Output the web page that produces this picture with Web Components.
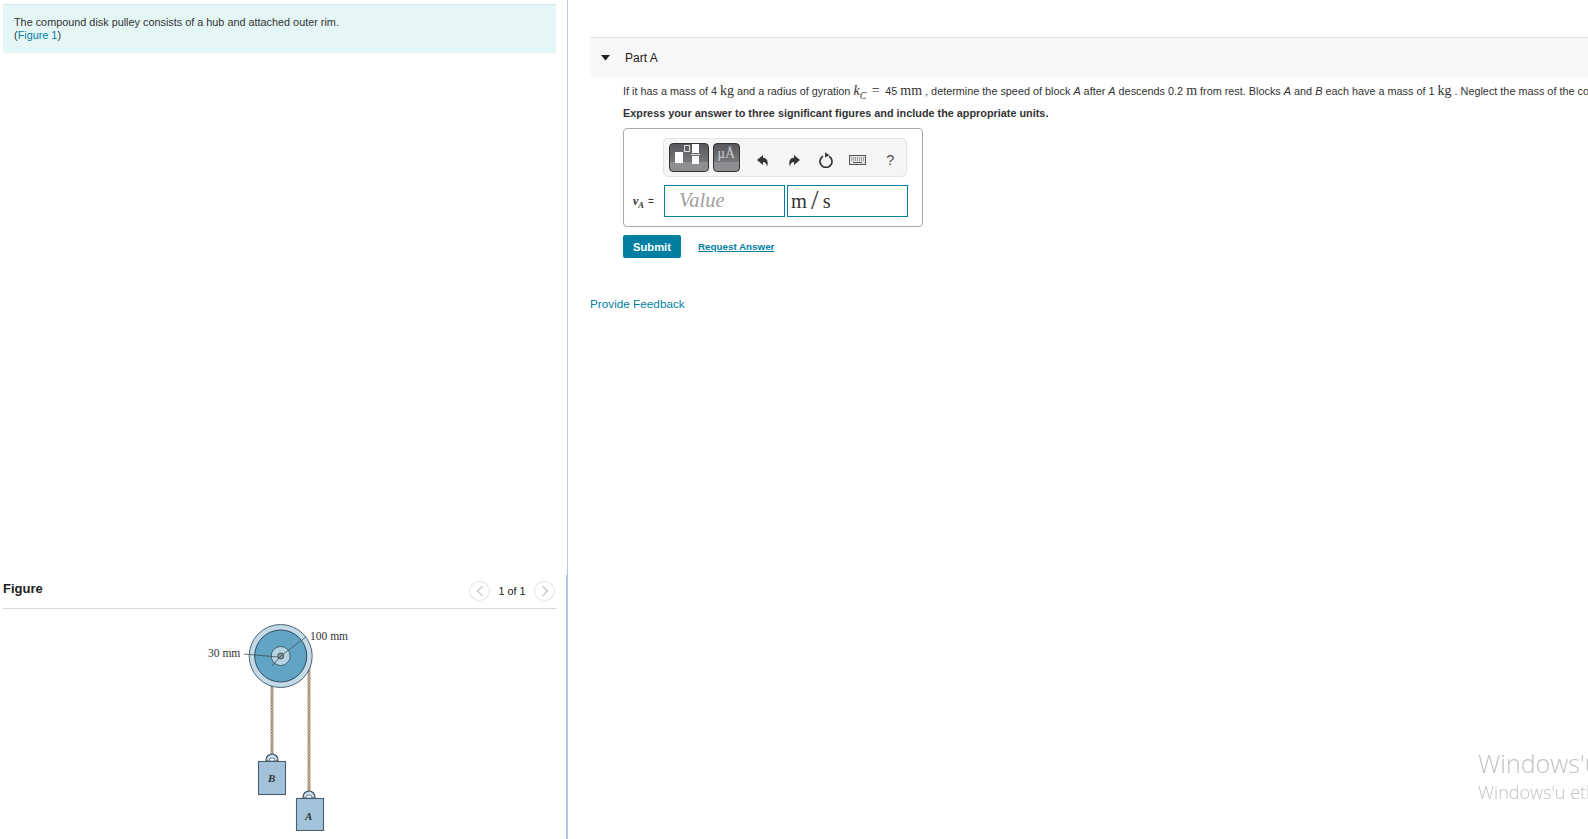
<!DOCTYPE html>
<html>
<head>
<meta charset="utf-8">
<style>
	html, body { margin: 0; height: 100%; background: #fff; overflow: hidden; }
	body { font-family: "Liberation Sans", Arial, sans-serif; color: #212121; }
</style>
</head>
<body>
<mastering-page>
	<problem-intro slot="left">
		The compound disk pulley consists of a hub and attached outer rim.<br>
		(<a>Figure 1</a>)
	</problem-intro>
	<figure-pane slot="left"></figure-pane>
	<part-header slot="right">Part A</part-header>
	<part-body slot="right"></part-body>
	<feedback-link slot="right">Provide Feedback</feedback-link>
</mastering-page>
<os-watermark></os-watermark>

<script>
class MasteringPage extends HTMLElement {
	constructor() {
		super();
		this.shadow = this.attachShadow({ mode: "open" });
		this.shadow.innerHTML = `
		<style>
			:host { display: flex; height: 839px; overflow: hidden; }
			.left {
				box-sizing: border-box;
				flex: 0 0 566px;
				height: 839px;
				padding: 4px 10px 0 3px;
				display: flex;
				flex-direction: column;
				justify-content: space-between;
			}
			.line { flex: 0 0 2px; display: flex; flex-direction: column; }
			.line i { display: block; flex: 0 0 575px; margin-left: 1px; background: #b9c8da; }
			.line b { display: block; flex: 1; background: #adc6e2; }
			.right {
				box-sizing: border-box;
				flex: 1;
				min-width: 0;
				padding: 37px 0 0 22px;
				overflow: hidden;
			}
		</style>
		<div class="left"><slot name="left"></slot></div>
		<div class="line"><i></i><b></b></div>
		<div class="right"><slot name="right"></slot></div>`;
	}
}

class ProblemIntro extends HTMLElement {
	constructor() {
		super();
		this.shadow = this.attachShadow({ mode: "open" });
		this.shadow.innerHTML = `
		<style>
			:host {
				display: block;
				box-sizing: border-box;
				height: 49px;
				padding: 11px 11px 0;
				background: #e5f6f7;
				border-top: 1px solid #dfe3e3;
				font-size: 10.85px;
				line-height: 13px;
				color: #333;
			}
		</style>
		<slot></slot>`;
	}
	connectedCallback() {
		this.querySelector("a").style.color = "#007fa3";
	}
}

class PagerControl extends HTMLElement {
	constructor() {
		super();
		this.shadow = this.attachShadow({ mode: "open" });
		this.shadow.innerHTML = `
		<style>
			:host { display: flex; align-items: center; font-size: 10.85px; color: #212121; }
			.btn {
				box-sizing: border-box;
				width: 21px;
				height: 20px;
				border: 1px solid #e6e6e6;
				border-radius: 50%;
				display: flex;
				align-items: center;
				justify-content: center;
			}
			span { width: 44px; text-align: center; }
		</style>
		<div class="btn"><svg width="8" height="12" viewBox="0 0 8 12"><path d="M6.500 1 1.500 6l5 5" fill="none" stroke="#c3cbd0" stroke-width="1.400"/></svg></div>
		<span>1 of 1</span>
		<div class="btn"><svg width="8" height="12" viewBox="0 0 8 12"><path d="M1.500 1l5 5-5 5" fill="none" stroke="#c3cbd0" stroke-width="1.400"/></svg></div>`;
	}
}
customElements.define("pager-control", PagerControl);

class PulleyDiagram extends HTMLElement {
	constructor() {
		super();
		this.shadow = this.attachShadow({ mode: "open" });
		// drawing sits on the figure's free canvas, so its own coordinates are the content
		this.shadow.innerHTML = `
		<style>
			:host { display: block; height: 222px; margin-left: 187px; }
			svg { display: block; }
			text { font-family: "Liberation Serif", serif; fill: #333; }
		</style>
		<svg width="170" height="222" viewBox="0 0 170 222">
			<defs>
				<pattern id="rope" width="3" height="3" patternUnits="userSpaceOnUse">
					<rect width="3" height="3" fill="#cdbda5"/>
					<rect y="0" width="1.500" height="1.500" fill="#8e7d66"/>
					<rect x="1.500" y="1.500" width="1.500" height="1.500" fill="#8e7d66"/>
				</pattern>
				<filter id="soft"><feGaussianBlur stdDeviation="0.4"/></filter>
			</defs>
			<g filter="url(#soft)">
				<rect x="80.500" y="47" width="3" height="102" fill="url(#rope)"/>
				<rect x="117.500" y="55" width="3" height="134" fill="url(#rope)"/>
				<circle cx="90.700" cy="47" r="31.500" fill="#c3dbe8" stroke="#4c6272" stroke-width="1"/>
				<circle cx="90.700" cy="47" r="26" fill="#62a4c4" stroke="#2f4a5a" stroke-width="1"/>
				<circle cx="90.700" cy="47" r="9.500" fill="#b5d3e2" stroke="#2f4a5a" stroke-width=".8"/>
				<circle cx="90.700" cy="47" r="3" fill="#8a9aa3" stroke="#333" stroke-width=".8"/>
				<path d="M54 45 88 48M90.700 47 116 28M90.700 47 82 57" fill="none" stroke="#3d4c55" stroke-width=".8"/>
				<path d="M76 151a6 6 0 0 1 12 0v1H76z" fill="#c3dbe8" stroke="#3d4c55" stroke-width="1.200"/>
				<path d="M79 152a3 3 0 0 1 6 0z" fill="#fff" stroke="#3d4c55" stroke-width=".6"/>
				<rect x="68.500" y="152.500" width="27" height="33" fill="#a3c3da" stroke="#46616f" stroke-width="1.100"/>
				<path d="M113 188a6 6 0 0 1 12 0v1h-12z" fill="#c3dbe8" stroke="#3d4c55" stroke-width="1.200"/>
				<path d="M116 189a3 3 0 0 1 6 0z" fill="#fff" stroke="#3d4c55" stroke-width=".6"/>
				<rect x="106.500" y="189.500" width="27" height="32" fill="#a3c3da" stroke="#46616f" stroke-width="1.100"/>
			</g>
			<text x="18" y="48" font-size="11.500">30 mm</text>
			<text x="120" y="31" font-size="11.500">100 mm</text>
			<text x="78" y="173" font-size="11" font-style="italic" font-weight="bold">B</text>
			<text x="115" y="211" font-size="11" font-style="italic" font-weight="bold">A</text>
		</svg>`;
	}
}
customElements.define("pulley-diagram", PulleyDiagram);

class FigurePane extends HTMLElement {
	constructor() {
		super();
		this.shadow = this.attachShadow({ mode: "open" });
		this.shadow.innerHTML = `
		<style>
			:host { display: block; padding-bottom: 8px; }
			header {
				box-sizing: border-box;
				height: 28px;
				display: flex;
				justify-content: space-between;
				border-bottom: 1px solid #d9d9d9;
			}
			h2 { margin: 0; font-size: 13px; line-height: 15px; font-weight: bold; color: #212121; }
			pager-control { height: 20px; margin: 0 1px 0 0; }
		</style>
		<header>
			<h2>Figure</h2>
			<pager-control></pager-control>
		</header>
		<pulley-diagram></pulley-diagram>`;
	}
}

class PartHeader extends HTMLElement {
	constructor() {
		super();
		this.shadow = this.attachShadow({ mode: "open" });
		this.shadow.innerHTML = `
		<style>
			:host {
				display: flex;
				align-items: center;
				box-sizing: border-box;
				height: 40px;
				background: #f8f8f8;
				border-top: 1px solid #dedede;
				font-size: 12px;
				color: #212121;
			}
			svg { margin: 0 14px 0 11px; }
		</style>
		<svg width="10" height="6" viewBox="0 0 10 6"><path d="M0 0h9L4.500 5.500z" fill="#222"/></svg>
		<slot></slot>`;
	}
}

class ToolBar extends HTMLElement {
	constructor() {
		super();
		this.shadow = this.attachShadow({ mode: "open" });
		this.shadow.innerHTML = `
		<style>
			:host {
				display: flex;
				align-items: center;
				box-sizing: border-box;
				width: 244px;
				height: 39px;
				padding: 0 0 0 5px;
				border: 1px solid #e3e3e3;
				border-radius: 5px;
				background: #f5f5f5;
			}
			.tpl {
				box-sizing: border-box;
				height: 29px;
				margin-right: 4px;
				border: 1px solid #333;
				border-radius: 4px;
				background: linear-gradient(#58585c, #77777b 66%, #8f8f93 66%, #8f8f93);
				display: flex;
				align-items: center;
				justify-content: center;
				color: #cfcfd2;
			}
			.a { width: 41px; }
			.b { width: 28px; font: 14px/14px "Liberation Serif", serif; padding-bottom: 8px; }
			.ic { width: 32.600px; display: flex; justify-content: center; align-items: center; padding-top: 5px; }
			.ic.first { margin-left: 3px; }
			.q { font-size: 14.500px; color: #555; line-height: 16px; margin-left: 1px; }
		</style>
		<div class="tpl a"><svg width="36" height="27" viewBox="0 0 36 27">
			<rect x="4" y="8" width="8" height="11" fill="#fff"/>
			<rect x="13.500" y="1.500" width="5" height="6" fill="none" stroke="#ddd"/>
			<rect x="21" y="0" width="7" height="9" fill="#fff"/>
			<rect x="20" y="10" width="9" height="1" fill="#ddd"/>
			<rect x="21" y="12" width="7" height="8" fill="#fff"/>
		</svg></div>
		<div class="tpl b">μÅ</div>
		<div class="ic first"><svg width="14" height="13" viewBox="0 0 14 13"><path d="M7 1 1 6l6 5V8c2.500 0 3.500 1.500 4 4.500C13 7 10.500 3.800 7 3.800z" fill="#333"/></svg></div>
		<div class="ic"><svg width="14" height="13" viewBox="0 0 14 13"><path d="M7 1l6 5-6 5V8c-2.500 0-3.500 1.500-4 4.500C1 7 3.500 3.800 7 3.800z" fill="#333"/></svg></div>
		<div class="ic"><svg width="16" height="16" viewBox="0 0 16 16"><path d="M5 4.200a6 6 0 1 0 6 0" fill="none" stroke="#333" stroke-width="1.700"/><path d="M7 .5 11.500 3 7 5.500z" fill="#333"/></svg></div>
		<div class="ic"><svg width="17" height="10" viewBox="0 0 17 10"><rect x=".5" y=".5" width="16" height="9" fill="#e4e4e4" stroke="#555"/><path d="M2 3h13M2 5h13" stroke="#555" stroke-dasharray="1 1"/><path d="M4 7.500h9" stroke="#555"/></svg></div>
		<div class="ic q">?</div>`;
	}
}
customElements.define("tool-bar", ToolBar);

class AnswerBox extends HTMLElement {
	constructor() {
		super();
		this.shadow = this.attachShadow({ mode: "open" });
		this.shadow.innerHTML = `
		<style>
			:host {
				display: block;
				box-sizing: border-box;
				width: 300px;
				height: 99px;
				padding: 9px 0 0 39px;
				border: 1px solid #a8a8a8;
				border-radius: 4px;
			}
			.row { display: flex; align-items: center; margin: 8px 0 0 -30px; }
			label { flex: 0 0 31px; font-size: 10px; color: #333; white-space: nowrap; }
			label i { font-family: "Liberation Serif", serif; font-weight: bold; font-size: 12px; }
			sub { font-size: 8.500px; font-family: "Liberation Serif", serif; font-style: italic; font-weight: bold; line-height: 0; margin-right: 4px; }
			.field {
				box-sizing: border-box;
				width: 121px;
				height: 32px;
				margin-right: 2px;
				padding-left: 14px;
				border: 1px solid #007fa3;
				font: 20.500px/28px "Liberation Serif", serif;
				color: #333;
			}
			.value { font-style: italic; color: #a0a0a0; }
			.unit { padding-left: 3px; }
			.unit span { font: 27px/28px "Liberation Serif", serif; margin: 0 -1px; vertical-align: -1px; }
		</style>
		<tool-bar></tool-bar>
		<div class="row">
			<label><i>v</i><sub>A</sub>=</label>
			<div class="field value">Value</div>
			<div class="field unit">m <span>/</span> s</div>
		</div>`;
	}
}

class PartBody extends HTMLElement {
	constructor() {
		super();
		this.shadow = this.attachShadow({ mode: "open" });
		this.shadow.innerHTML = `
		<style>
			:host { display: block; padding: 7px 0 0 33px; font-size: 10.850px; line-height: 14px; color: #333; }
			p { margin: 0; white-space: nowrap; }
			.m { font-family: "Liberation Serif", serif; font-size: 14px; }
			.m sub { font-size: 10px; line-height: 0; font-style: italic; }
			.m b { font-weight: normal; margin: 0 5.500px; }
			.ask { margin-top: 8px; font-weight: bold; color: #333; }
			answer-box { margin-top: 8px; }
			.actions { display: flex; align-items: center; margin-top: 8px; }
			button {
				box-sizing: border-box;
				width: 58px;
				height: 23px;
				padding: 0;
				border: 0;
				border-radius: 2px;
				background: #007fa3;
				color: #fff;
				font: bold 11.200px "Liberation Sans", sans-serif;
			}
			a { margin-left: 17px; color: #007fa3; font-weight: bold; font-size: 9.800px; text-decoration: underline; }
		</style>
		<p>If it has a mass of 4 <span class="m">kg</span> and a radius of gyration <span class="m"><i>k</i><sub>C</sub><b>=</b></span>45 <span class="m">mm</span> , determine the speed of block <i>A</i> after <i>A</i> descends 0.2 <span class="m">m</span> from rest. Blocks <i>A</i> and <i>B</i> each have a mass of 1 <span class="m">kg</span> . Neglect the mass of the cord.</p>
		<p class="ask">Express your answer to three significant figures and include the appropriate units.</p>
		<answer-box></answer-box>
		<div class="actions">
			<button>Submit</button>
			<a>Request Answer</a>
		</div>`;
	}
}

class FeedbackLink extends HTMLElement {
	constructor() {
		super();
		this.shadow = this.attachShadow({ mode: "open" });
		this.shadow.innerHTML = `
		<style>
			:host { display: block; margin-top: 39px; font-size: 11.750px; line-height: 14px; color: #007fa3; }
		</style>
		<slot></slot>`;
	}
}

class OsWatermark extends HTMLElement {
	constructor() {
		super();
		this.shadow = this.attachShadow({ mode: "open" });
		this.shadow.innerHTML = `
		<style>
			:host {
				position: fixed;
				left: 1478px;
				top: 745px;
				white-space: nowrap;
				font-family: "Open Sans", sans-serif;
				font-weight: 300;
				color: #c2c2c2;
				pointer-events: none;
			}
			div { font-size: 25px; line-height: 36px; }
			div + div { font-size: 18px; line-height: 23px; }
		</style>
		<div>Windows'u</div>
		<div>Windows'u etkinleştir</div>`;
	}
}

customElements.define("problem-intro", ProblemIntro);
customElements.define("figure-pane", FigurePane);
customElements.define("part-header", PartHeader);
customElements.define("answer-box", AnswerBox);
customElements.define("part-body", PartBody);
customElements.define("feedback-link", FeedbackLink);
customElements.define("os-watermark", OsWatermark);
customElements.define("mastering-page", MasteringPage);
</script>
</body>
</html>
